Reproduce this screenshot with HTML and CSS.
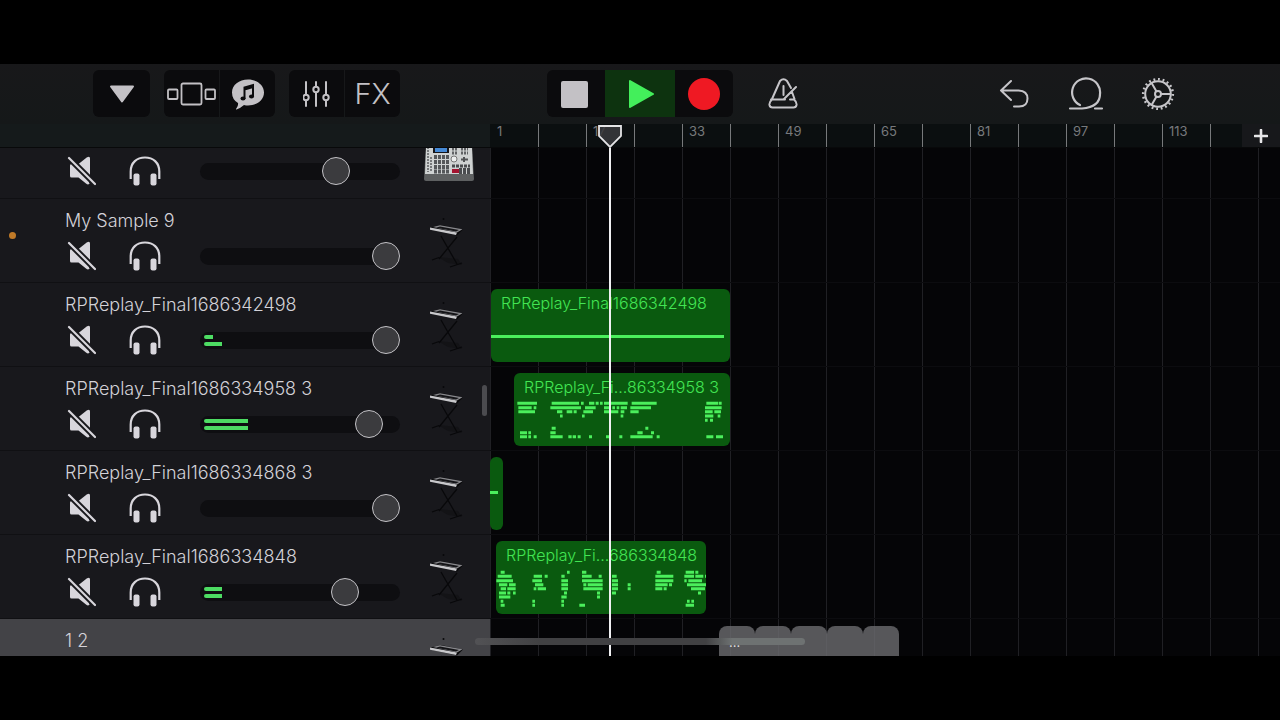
FILE: index.html
```
<!DOCTYPE html>
<html lang="en">
<head>
<meta charset="utf-8">
<meta name="viewport" content="width=device-width, initial-scale=1">
<title>Tracks</title>
<link rel="stylesheet" href="styles.css">
</head>
<body>
<svg class="symbols" aria-hidden="true">
  <symbol id="mute" viewBox="0 0 30 32">
    <path d="M4 10.500Q4 9 5.500 9H12.500L21 2.300Q24 .500 24 3.500V28Q22.500 30.500 20 28.500L12.500 22.500H5.500Q4 22.500 4 21Z" fill="currentColor"/>
    <path d="M24 19 30 25V31L23 28Z" fill="#18181c"/>
    <path d="M1 1 31 31" stroke="#18181c" stroke-width="6"/>
    <path d="M3 3 29 29" stroke="currentColor" stroke-width="2.200" stroke-linecap="round"/>
  </symbol>
  <symbol id="phones" viewBox="0 0 32 30">
    <path d="M1.700 23V15.500C1.700 6.500 8 1.500 16 1.500S30.300 6.500 30.300 15.500V23" fill="none" stroke="currentColor" stroke-width="2.200"/>
    <rect x="4.500" y="17.500" width="6" height="12" rx="2" fill="currentColor"/>
    <rect x="21.500" y="17.500" width="6" height="12" rx="2" fill="currentColor"/>
  </symbol>
  <symbol id="keys" viewBox="0 0 40 56">
    <circle cx="15.500" cy="5" r="1" fill="#08080a"/>
    <path d="M10 43 30 45 34 51 20 49Z" fill="#131316"/>
    <path d="M13 22 29 50M29 23 11 45M4 46 11 43.500M22 53 34 49" fill="none" stroke="#08080a" stroke-width="1.300"/>
    <path d="M2 13.500 13 11 35 15.500 29 21.500 2 15.500Z" fill="#08080a"/>
    <path d="M2 13.500 29 18.500 28 21 2 15.800Z" fill="#c8c8cb"/>
    <path d="M5 13 12 11.300 34.500 15.300 29 18.500Z" fill="#88888c"/>
    <path d="M12 12.600 31 16 28 17.600 8 13.700Z" fill="#141417"/>
  </symbol>
  <symbol id="drum" viewBox="0 0 50 58">
    <path d="M3 2H47L50 56Q50 58 48 58H2Q0 58 0 56Z" fill="#5e6061"/>
    <path d="M3 2H47L49 51H1Z" fill="#cfd2d2"/>
    <rect x="9" y="22" width="16" height="8" fill="#15151a"/>
    <rect x="11" y="24" width="12" height="5" fill="#4589d5"/>
    <path d="M10 34H25M10 39H25M10 44H25M10 48.500H25" stroke="#55575a" stroke-width="4" stroke-dasharray="3 1"/>
    <path d="M4 24V49M7 34V49" stroke="#77797b" stroke-width="2" stroke-dasharray="2 1"/>
    <path d="M28 26H34M28 30H34M37 26H44M37 30H44" stroke="#606265" stroke-width="3" stroke-dasharray="2 1"/>
    <circle cx="30" cy="36" r="3" fill="#eceeee" stroke="#777"/>
    <path d="M40 34V39M37 36.500H44" stroke="#515355" stroke-width="2"/>
    <path d="M28 43H46M35 46.500H46M35 49.500H46" stroke="#494b4e" stroke-width="3" stroke-dasharray="3 1"/>
    <rect x="28" y="46" width="7" height="4" fill="#a31330"/>
  </symbol>
</svg>

<div class="app">
  <header class="toolbar">
    <div class="tools-left">
      <div class="group"><button class="tool" aria-label="Browser"><svg width="26" height="20" viewBox="0 0 26 20"><path d="M2 2.500H24L13 17.500Z" fill="currentColor" stroke="currentColor" stroke-width="2" stroke-linejoin="round"/></svg></button></div>
      <div class="group">
        <button class="tool" aria-label="Instruments"><svg width="50" height="24" viewBox="0 0 50 24" fill="none" stroke="currentColor" stroke-width="1.800"><rect x="14.500" y="1.500" width="20" height="21" rx="1.500"/><rect x="1" y="7.500" width="9.500" height="9.500" rx="1"/><rect x="38.500" y="7.500" width="9.500" height="9.500" rx="1"/></svg></button>
        <button class="tool" aria-label="Loops"><svg width="34" height="32" viewBox="0 0 34 32"><path d="M17 1.500C26 1.500 33 7 33 14.500S26 27.500 17 27.500Q15 27.500 13 27 9 30.500 5.500 31.500 4.500 31.500 5.300 30.500 7.500 28 7 25 1 21.500 1 14.500C1 7 8 1.500 17 1.500Z" fill="currentColor"/><path d="M13.500 21V9.500L22 7V18.500M13.500 11.500 22 9" fill="none" stroke="#0b0b0d" stroke-width="2"/><ellipse cx="12" cy="20.500" rx="2.500" ry="2" fill="#0b0b0d"/><ellipse cx="20.500" cy="18.500" rx="2.500" ry="2" fill="#0b0b0d"/></svg></button>
      </div>
      <div class="group">
        <button class="tool" aria-label="Mixer"><svg width="28" height="28" viewBox="0 0 28 28" fill="none" stroke="currentColor" stroke-width="2" stroke-linecap="round"><path d="M3 2V14M3 21V26M13 2V6M13 13V26M23 2V14M23 21V26"/><circle cx="3" cy="17.500" r="2.700"/><circle cx="13" cy="9.500" r="2.700"/><circle cx="23" cy="17.500" r="2.700"/></svg></button>
        <button class="tool fx">FX</button>
      </div>
    </div>
    <div class="group transport">
      <button class="tool" aria-label="Stop"><svg width="30" height="28" viewBox="0 0 30 28"><rect x="0" y="1" width="27" height="27" rx="2" fill="currentColor"/></svg></button>
      <button class="tool play" aria-label="Play"><svg width="28" height="32" viewBox="0 0 28 32"><path d="M4 3 27 16 4 29Z" fill="currentColor" stroke="currentColor" stroke-width="2" stroke-linejoin="round"/></svg></button>
      <button class="tool record" aria-label="Record"><svg width="32" height="32"><circle cx="16" cy="16" r="16" fill="currentColor"/></svg></button>
    </div>
    <div class="tools-right">
      <button class="plain" aria-label="Metronome"><svg width="32" height="32" viewBox="0 0 32 32" fill="none" stroke="currentColor" stroke-width="2" stroke-linecap="round" stroke-linejoin="round"><path d="M24 10 20 3Q16.500-.500 13 3L5 21M25 14 27.500 21M4 21.500H18M23 21.500H27M5 21.500Q2 24 2.500 27 3 29.500 5.500 29.500H26.500Q29 29.500 29.500 27 30 24 27 21.500M16.500 8V17M29 9 16.500 21.500"/></svg></button>
      <div class="tools-end">
        <button class="plain" aria-label="Undo"><svg width="30" height="30" viewBox="0 0 30 30" fill="none" stroke="currentColor" stroke-width="2" stroke-linecap="round" stroke-linejoin="round"><path d="M12 2 2 11.500 12 21M2 11.500H19.500Q28.500 12 28.500 19.500 28.500 27.500 20 27.500H15"/></svg></button>
        <button class="plain" aria-label="Loop Browser"><svg width="36" height="34" viewBox="0 0 36 34" fill="none" stroke="currentColor" stroke-width="2.200" stroke-linecap="round"><path d="M2 31.500H14Q32 30 32 17A14 14 0 1 0 12 28M27 31.500H34"/></svg></button>
        <button class="plain" aria-label="Settings"><svg width="34" height="34" viewBox="0 0 34 34" fill="none" stroke="currentColor"><circle cx="17" cy="17" r="12.800" stroke-width="2"/><circle cx="17" cy="17" r="14.800" stroke-width="2.600" pathLength="100" stroke-dasharray="2 3"/><circle cx="17" cy="17" r="3" stroke-width="2"/><path d="M20 17H30M15.500 14.400 10.600 6M15.500 19.600 10.600 28" stroke-width="2"/></svg></button>
      </div>
    </div>
  </header>

  <div class="ruler-row">
    <div class="ruler">
      <span class="tick">1</span><span class="tick"></span><span class="tick">17</span><span class="tick"></span><span class="tick">33</span><span class="tick"></span><span class="tick">49</span><span class="tick"></span><span class="tick">65</span><span class="tick"></span><span class="tick">81</span><span class="tick"></span><span class="tick">97</span><span class="tick"></span><span class="tick">113</span><span class="tick"></span>
    </div>
    <button class="add" aria-label="Add section"><svg width="14" height="14" viewBox="0 0 14 14"><path d="M7 1V13M1 7H13" stroke="currentColor" stroke-width="2.600" stroke-linecap="round"/></svg></button>
  </div>

  <main class="workspace">
    <section class="tracks" aria-label="Tracks">
      <article class="track partial">
        <div class="controls">
          <button class="ctl" aria-label="Mute"><svg width="30" height="32"><use href="#mute"/></svg></button>
          <button class="ctl" aria-label="Solo"><svg width="32" height="30"><use href="#phones"/></svg></button>
          <div class="volume"><input type="range" aria-label="Volume" min="0" max="100" value="71"></div>
        </div>
        <svg class="drum" width="50" height="58"><use href="#drum"/></svg>
      </article>
      <article class="track">
        <h2 class="name">My Sample 9</h2>
        <div class="controls">
          <button class="ctl" aria-label="Mute"><svg width="30" height="32"><use href="#mute"/></svg></button>
          <button class="ctl" aria-label="Solo"><svg width="32" height="30"><use href="#phones"/></svg></button>
          <div class="volume"><input type="range" aria-label="Volume" min="0" max="100" value="100"></div>
        </div>
        <svg class="keys" width="40" height="56"><use href="#keys"/></svg>
        <span class="mic-dot"></span>
      </article>
      <article class="track">
        <h2 class="name">RPReplay_Final1686342498</h2>
        <div class="controls">
          <button class="ctl" aria-label="Mute"><svg width="30" height="32"><use href="#mute"/></svg></button>
          <button class="ctl" aria-label="Solo"><svg width="32" height="30"><use href="#phones"/></svg></button>
          <div class="volume"><input type="range" aria-label="Volume" min="0" max="100" value="100"><div class="meter"><i style="width:9px"></i><i style="width:18px"></i></div></div>
        </div>
        <svg class="keys" width="40" height="56"><use href="#keys"/></svg>
      </article>
      <article class="track">
        <h2 class="name">RPReplay_Final1686334958 3</h2>
        <div class="controls">
          <button class="ctl" aria-label="Mute"><svg width="30" height="32"><use href="#mute"/></svg></button>
          <button class="ctl" aria-label="Solo"><svg width="32" height="30"><use href="#phones"/></svg></button>
          <div class="volume"><input type="range" aria-label="Volume" min="0" max="100" value="90"><div class="meter"><i style="width:44px"></i><i style="width:44px"></i></div></div>
        </div>
        <svg class="keys" width="40" height="56"><use href="#keys"/></svg>
      </article>
      <article class="track">
        <h2 class="name">RPReplay_Final1686334868 3</h2>
        <div class="controls">
          <button class="ctl" aria-label="Mute"><svg width="30" height="32"><use href="#mute"/></svg></button>
          <button class="ctl" aria-label="Solo"><svg width="32" height="30"><use href="#phones"/></svg></button>
          <div class="volume"><input type="range" aria-label="Volume" min="0" max="100" value="100"></div>
        </div>
        <svg class="keys" width="40" height="56"><use href="#keys"/></svg>
      </article>
      <article class="track">
        <h2 class="name">RPReplay_Final1686334848</h2>
        <div class="controls">
          <button class="ctl" aria-label="Mute"><svg width="30" height="32"><use href="#mute"/></svg></button>
          <button class="ctl" aria-label="Solo"><svg width="32" height="30"><use href="#phones"/></svg></button>
          <div class="volume"><input type="range" aria-label="Volume" min="0" max="100" value="76"><div class="meter"><i style="width:18px"></i><i style="width:18px"></i></div></div>
        </div>
        <svg class="keys" width="40" height="56"><use href="#keys"/></svg>
      </article>
      <article class="track selected">
        <h2 class="name">1 2</h2>
        <svg class="keys" width="40" height="56"><use href="#keys"/></svg>
      </article>
      <span class="resize"></span>
    </section>

    <section class="timeline" aria-label="Timeline">
      <div class="lane partial"></div>
      <div class="lane"></div>
      <div class="lane"><div class="region region-a"><span class="region-name">RPReplay_Final1686342498</span><span class="wave"></span></div></div>
      <div class="lane"><div class="region region-b"><span class="region-name">RPReplay_Fi…86334958 3</span>
        <svg class="notes" viewBox="27 18 648 219"><path d="M37 109h59M140 109h82M228 109h8M252 109h16M272 109h9M285 109h8M297 109h71M380 109h75M604 109h36M642 109h8M40 122h40M86 122h8M136 122h92M240 122h32M297 122h20M322 122h8M335 122h8M347 122h19M376 122h62M600 122h50M40 134h50M156 134h16M185 134h17M206 134h9M235 134h29M297 134h43M347 134h11M376 134h25M600 134h23M628 134h20M165 147h8M231 147h8M347 147h8M600 147h25M638 147h8M600 160h8M615 160h9M140 184h12M421 184h9M45 197h21M70 197h8M136 197h16M397 197h16M438 197h9M45 209h21M70 209h8M86 209h9M136 209h37M190 209h10M203 209h10M218 209h9M252 209h9M303 209h9M343 209h9M376 209h67M455 209h9M604 209h21M633 209h21"/></svg></div></div>
      <div class="lane"><div class="region region-c"><span class="blip"></span></div></div>
      <div class="lane"><div class="region region-d"><span class="region-name">RPReplay_Fi…686334848</span>
        <svg class="notes" viewBox="48 276 630 219"><path d="M62 370h12M261 370h8M306 370h13M530 370h12M617 370h25M646 370h9M53 382h42M161 382h25M194 382h9M244 382h10M306 382h29M356 382h9M396 382h14M526 382h54M613 382h29M646 382h24M675 382h5M49 395h50M157 395h29M244 395h20M306 395h62M396 395h18M526 395h54M613 395h7M625 395h41M57 407h25M87 407h20M165 407h25M244 407h20M310 407h9M323 407h45M396 407h18M443 407h9M526 407h37M567 407h9M621 407h59M62 419h16M82 419h25M161 419h8M173 419h25M244 419h20M310 419h58M396 419h18M443 419h9M526 419h21M551 419h9M633 419h42M57 432h21M82 432h9M99 432h8M252 432h9M351 432h9M396 432h12M654 432h9M57 444h34M244 444h16M351 444h9M62 457h8M157 457h8M244 457h8M621 457h8M634 457h8M62 469h12M157 469h8M244 469h8M298 469h17M617 469h25"/></svg></div></div>
      <div class="lane"><div class="loops"><span class="loop">...</span><span class="loop"></span><span class="loop"></span><span class="loop"></span><span class="loop"></span></div></div>
      <div class="playhead"><svg width="24" height="24" viewBox="0 0 24 24"><path d="M1 2H23V12L12 23 1 12Z" fill="#3a3a3d" fill-opacity=".85" stroke="#e4e4e6" stroke-width="1.800"/></svg></div>
    </section>
  </main>
  <div class="home-bar"></div>
</div>
</body>
</html>
```
FILE: styles.css
```
* { box-sizing: border-box; }

body {
  margin: 0;
  padding: 64px 0;
  background: #000;
  color: #d3d2d8;
  font-family: Inter, "Liberation Sans", sans-serif;
}

button {
  margin: 0;
  padding: 0;
  border: 0;
  background: none;
  color: inherit;
  font: inherit;
  display: grid;
  place-items: center;
}

svg { display: block; }
.symbols { position: absolute; width: 0; height: 0; }

.app {
  position: relative;
  height: calc(100vh - 128px);
  display: flex;
  flex-direction: column;
  overflow: hidden;
}

/* Toolbar */
.toolbar {
  flex: none;
  height: 60px;
  padding-top: 6px;
  display: grid;
  grid-template-columns: 1fr auto 1fr;
  align-items: start;
  background: linear-gradient(#18181a, #151819);
}

.tools-left { display: flex; gap: 14px; padding-left: 93px; }

.group {
  display: flex;
  gap: 1px;
  border-radius: 6px;
  overflow: hidden;
}

.tool {
  width: 55px;
  height: 47px;
  background: #0b0b0d;
  color: #c3c1c5;
}

.group .tool:only-child { width: 57px; }
.fx { font-size: 29px; font-weight: 300; }

.transport { gap: 0; }
.transport .tool { width: 58px; }
.transport .play { width: 70px; background: #0d330f; color: #43ef5b; }
.transport .record { color: #ef1923; }

.tools-right {
  display: flex;
  justify-content: space-between;
  padding: 0 98px 0 26px;
}
.tools-end { display: flex; gap: 24px; }
.plain { width: 48px; height: 47px; color: #c6c5c9; }

/* Ruler */
.ruler-row {
  flex: none;
  height: 24px;
  display: flex;
  padding-left: 490px;
  background: #151a1b;
  border-bottom: 1px solid #08090a;
}

.ruler {
  flex: 1;
  min-width: 0;
  display: flex;
  overflow: hidden;
  background: #0b0f10;
}

.tick {
  flex: none;
  width: 48px;
  padding-left: 6px;
  border-left: 1px solid #77797b;
  color: #77797c;
  font-size: 13px;
  line-height: 14px;
}
.tick:first-child { border-color: transparent; }

.add { width: 38px; background: #17181b; color: #e6e6e8; }

/* Workspace */
.workspace {
  flex: 1;
  min-height: 0;
  display: grid;
  grid-template-columns: 490px 1fr;
  grid-template-rows: minmax(0, 1fr);
}

.tracks {
  position: relative;
  background: #18181c;
  overflow: hidden;
}

.track {
  position: relative;
  height: 84px;
  padding: 10px 0 0 65px;
  border-bottom: 1px solid #101013;
}
.track.partial { height: 51px; padding-top: 0; }
.track.selected { background: #434347; }

.name {
  margin: 0;
  font-size: 18px;
  font-weight: 300;
  line-height: 24px;
}

.controls {
  display: flex;
  align-items: center;
  height: 46px;
}

.ctl { width: 32px; color: #d8d6dc; }
.ctl + .ctl { margin-left: 32px; }

.volume { position: relative; width: 200px; margin-left: 39px; }

.volume input {
  appearance: none;
  display: block;
  width: 100%;
  height: 17px;
  margin: 0;
  border-radius: 9px;
  background: #0e0e11;
}
.volume input::-webkit-slider-thumb {
  appearance: none;
  width: 28px;
  height: 28px;
  border: 1px solid #c3c2c6;
  border-radius: 50%;
  background: #3b3b3e;
}

.meter {
  position: absolute;
  left: 4px;
  top: 3px;
  display: grid;
  gap: 3px;
}
.meter i { height: 4px; border-radius: 2px 0 0 2px; background: #4ddc63; }

.keys { position: absolute; left: 428px; top: 15px; }
.drum { position: absolute; left: 424px; top: -25px; }

.mic-dot {
  position: absolute;
  left: 9px;
  top: 33px;
  width: 7px;
  height: 7px;
  border-radius: 50%;
  background: #c07a28;
}

.resize {
  position: absolute;
  right: 3px;
  top: 237px;
  width: 5px;
  height: 31px;
  border-radius: 3px;
  background: #4b4b4f;
}

/* Timeline */
.timeline {
  position: relative;
  background: repeating-linear-gradient(90deg, #202024 0 1px, #050507 1px 48px);
}

.lane {
  position: relative;
  height: 84px;
  border-bottom: 1px solid #0c0c0f;
}
.lane.partial { height: 51px; }

.region {
  position: absolute;
  top: 6px;
  height: 73px;
  border-radius: 6px;
  overflow: hidden;
  background: #0a5a0f;
  color: #42e553;
}
.region-a { left: 1px; width: 239px; }
.region-b { left: 24px; width: 216px; }
.region-c { left: 0; width: 13px; }
.region-d { left: 6px; width: 210px; }

.region-name {
  display: block;
  padding: 4px 10px;
  font-size: 16px;
  font-weight: 300;
  line-height: 20px;
  white-space: nowrap;
}

.notes {
  position: absolute;
  left: 0;
  top: 0;
  width: 100%;
  height: 100%;
  fill: none;
  stroke: #4bef5c;
  stroke-width: 9px;
}

.wave, .blip {
  position: absolute;
  left: 0;
  height: 3px;
  background: #4bef5c;
}
.wave { right: 6px; top: 46px; }
.blip { width: 8px; top: 34px; }

.loops {
  position: absolute;
  left: 229px;
  top: 7px;
  display: flex;
}
.loop {
  width: 36px;
  height: 77px;
  padding: 8px 10px;
  border-radius: 8px 8px 0 0;
  background: rgba(108, 108, 111, .8);
  color: #dededf;
  font-size: 13px;
  line-height: 16px;
}

.playhead {
  position: absolute;
  left: 119px;
  top: 0;
  bottom: 0;
  width: 2px;
  background: #f0f0f2;
}
.playhead svg { position: absolute; left: -11px; top: -24px; }

.home-bar {
  position: absolute;
  left: 50%;
  bottom: 11px;
  width: 330px;
  height: 7px;
  margin-left: -165px;
  border-radius: 4px;
  background: linear-gradient(90deg, #525255, #414143 20%, #414143 70%, #6e7272 78%);
}
```
